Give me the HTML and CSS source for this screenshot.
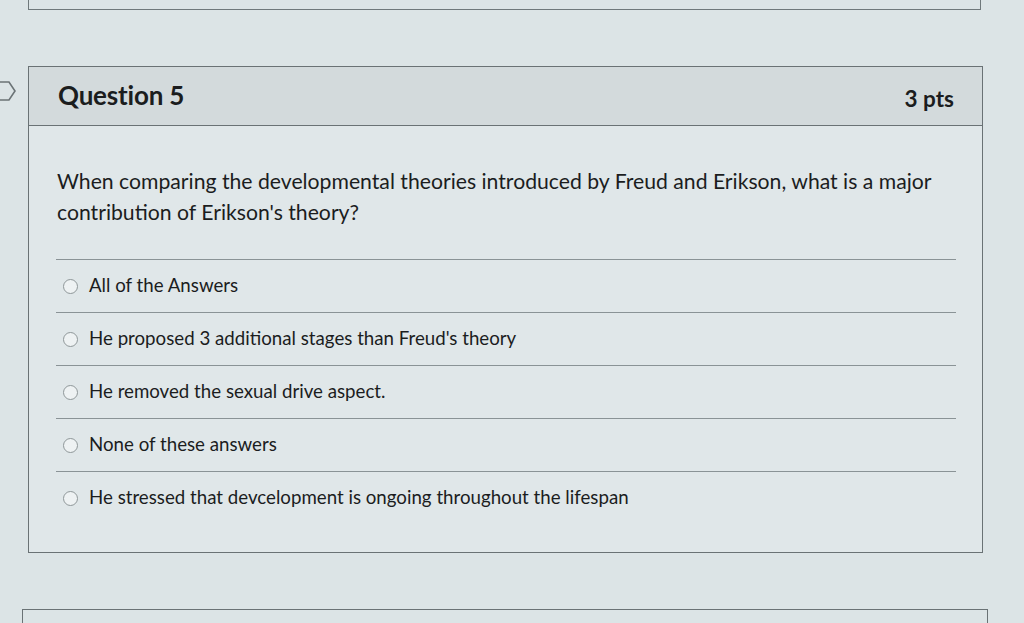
FILE: index.html
```html
<!DOCTYPE html>
<html lang="en">
<head>
<meta charset="utf-8">
<title>Question 5</title>
<link rel="stylesheet" href="styles.css">
</head>
<body>
<div class="page">
  <div class="prev-card"></div>
  <div class="question">
    <svg class="flag" width="16" height="22" viewBox="0 0 16 22" aria-hidden="true">
      <path d="M0 2 H9 L15 11 L9 20 H0" fill="none" stroke="#6b7376" stroke-width="1.6"/>
    </svg>
    <div class="q-header">
      <h2 class="q-title">Question 5</h2>
      <span class="q-pts">3 pts</span>
    </div>
    <div class="q-body">
      <p class="q-text">When comparing the developmental theories introduced by Freud and Erikson, what is a major contribution of Erikson's theory?</p>
      <ul class="answers">
        <li class="answer"><span class="radio"></span><span class="label">All of the Answers</span></li>
        <li class="answer"><span class="radio"></span><span class="label">He proposed 3 additional stages than Freud's theory</span></li>
        <li class="answer"><span class="radio"></span><span class="label">He removed the sexual drive aspect.</span></li>
        <li class="answer"><span class="radio"></span><span class="label">None of these answers</span></li>
        <li class="answer"><span class="radio"></span><span class="label">He stressed that devcelopment is ongoing throughout the lifespan</span></li>
      </ul>
    </div>
  </div>
  <div class="next-card"></div>
</div>
</body>
</html>
```

FILE: styles.css
```css
html, body {
  margin: 0;
  padding: 0;
}
body {
  background: #dce4e6;
  font-family: Lato, "Open Sans", sans-serif;
  color: #1b1d1e;
  width: 1024px;
  height: 623px;
  overflow: hidden;
}
.page {
  display: flex;
  flex-direction: column;
}
.prev-card {
  margin-left: 28px;
  width: 951px;
  height: 9px;
  border: 1px solid #6f787b;
  border-top: none;
}
.question {
  position: relative;
  margin-top: 56px;
  margin-left: 28px;
  width: 953px;
  border: 1px solid #6a7275;
  background: #e0e7e9;
}
.flag {
  position: absolute;
  left: -29px;
  top: 13px;
}
.q-header {
  height: 58px;
  background: #d3dadc;
  border-bottom: 1px solid #6a7275;
  display: flex;
  align-items: center;
  justify-content: space-between;
  padding: 0 28px 0 29px;
}
.q-title {
  margin: 0;
  font-size: 26px;
  font-weight: 700;
  letter-spacing: -0.2px;
  padding-bottom: 2px;
}
.q-pts {
  font-size: 22.5px;
  font-weight: 700;
  padding-top: 4px;
}
.q-body {
  padding: 40px 0 0 28px;
  height: 386px;
}
.q-text {
  margin: 0;
  width: 900px;
  font-size: 21.2px;
  line-height: 31px;
}
.answers {
  list-style: none;
  margin: 31px 0 0 -1px;
  padding: 0;
  width: 900px;
}
.answer {
  height: 52px;
  border-top: 1px solid #8a9396;
  display: flex;
  align-items: center;
  font-size: 18.7px;
}
.radio {
  width: 13px;
  height: 13px;
  border-radius: 50%;
  border: 1px solid #8f9799;
  background: #eef2f3;
  margin: 0 11px 0 7px;
  flex: none;
}
.label {
  padding-bottom: 2px;
}
.next-card {
  margin-top: 56px;
  margin-left: 22px;
  width: 964px;
  height: 30px;
  border: 1px solid #6a7275;
  border-bottom: none;
}
```
